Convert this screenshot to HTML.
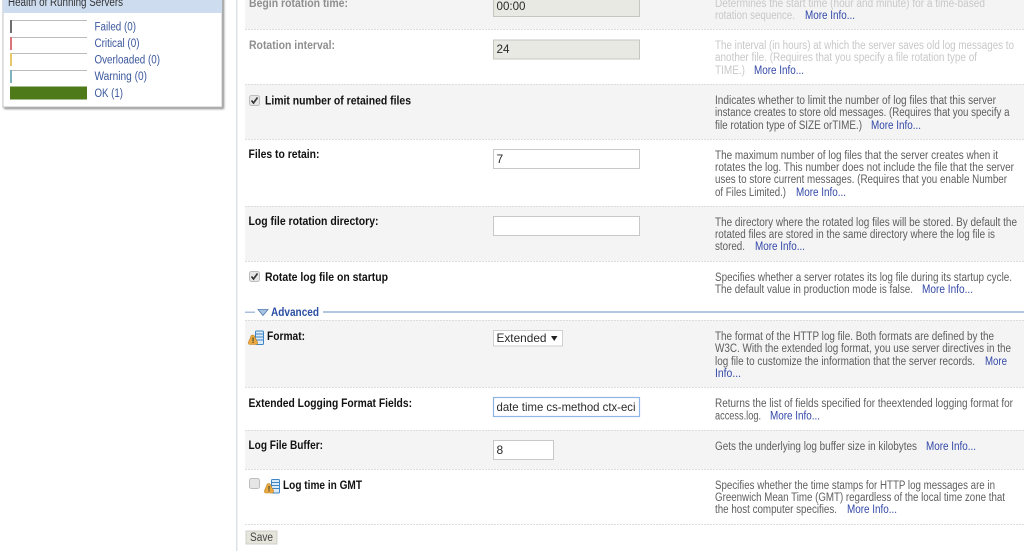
<!DOCTYPE html>
<html><head><meta charset="utf-8"><style>
html,body{margin:0;padding:0;background:#fff;overflow:hidden;width:1024px;height:551px}
svg{display:block;position:absolute;left:0;top:0;filter:blur(.35px)}
text{font-family:"Liberation Sans",sans-serif;font-size:11.5px;white-space:pre}
.d{fill:#5e5e5e}.g{fill:#c8c8c8}.m{fill:#3348a8}.b{font-weight:bold;fill:#111}.bg{font-weight:bold;fill:#8f8f8f}
.s{fill:#3a569c}.i{font-size:12px;fill:#2a2a2a}
.row{stroke:#ddd;stroke-dasharray:2 1;stroke-width:1}
</style></head><body>
<svg width="1024" height="551" viewBox="0 0 1024 551">
<defs>
<filter id="sh" x="-10%" y="-10%" width="120%" height="120%"><feDropShadow dx="1.5" dy="1.5" stdDeviation="1" flood-color="#555" flood-opacity=".7"/></filter>
<g id="ic"><rect x="7" y="0.5" width="8" height="13.5" rx="1" fill="#dcebf8" stroke="#3d86c6"/><path d="M7.5 3.5H14.5M7.5 6.5H14.5M7.5 9.5H14.5" stroke="#3d86c6"/><path d="M4 4.5 Q6 4.5 6.5 7 L9 11.5 Q9.5 14 7.5 14 H1.5 Q-0.5 14 0 11.5 L2 7 Q2.5 4.5 4 4.5Z" fill="#eba93f" stroke="#c08428" stroke-width=".6"/><rect x="3.9" y="7" width="1.3" height="3.6" fill="#553"/><rect x="3.9" y="11.2" width="1.3" height="1.3" fill="#553"/></g>
<g id="cb"><rect x="0.5" y="0.5" width="10" height="10" rx="2" fill="#e6e6e6" stroke="#bdbdbd"/></g>
<path id="ck" d="M2.5 5.5 L4.5 8 L8.5 2.5" fill="none" stroke="#333" stroke-width="1.6"/>
</defs>

<rect x="245" y="0" width="779" height="29" fill="#f4f4f4"/>
<rect x="245" y="84" width="779" height="55" fill="#f4f4f4"/>
<rect x="245" y="206" width="779" height="55" fill="#f4f4f4"/>
<rect x="245" y="320" width="779" height="67" fill="#f4f4f4"/>
<rect x="245" y="430" width="779" height="39" fill="#f4f4f4"/>
<path class="row" d="M245 29.5H1024M245 84.5H1024M245 139.5H1024M245 206.5H1024M245 261.5H1024M245 320.5H1024M245 387.5H1024M245 430.5H1024M245 469.5H1024M245 524.5H1024"/>
<rect x="236" y="0" width="1.5" height="551" fill="#dde2e8"/>

<rect x="3" y="-4" width="219" height="111" fill="#fff" stroke="#c4c4c4" filter="url(#sh)"/>
<rect x="3" y="0" width="219" height="13" fill="#cddcef"/>
<text x="8" y="6" fill="#333" textLength="115" lengthAdjust="spacingAndGlyphs">Health of Running Servers</text>
<g fill="#bbb">
<rect x="10" y="20" width="77" height="1"/><rect x="10" y="37" width="77" height="1"/><rect x="10" y="53" width="77" height="1"/><rect x="10" y="70" width="77" height="1"/>
</g>
<rect x="10" y="20" width="2" height="13" fill="#6e6e6e"/>
<rect x="10" y="37" width="2" height="13" fill="#d9737a"/>
<rect x="10" y="53" width="2" height="13" fill="#e6c96a"/>
<rect x="10" y="70" width="2" height="13" fill="#7fb2bd"/>
<rect x="10" y="86.5" width="77" height="13" fill="#4f7a1a"/>
<text class="s" x="94.5" y="30.5" textLength="41.5" lengthAdjust="spacingAndGlyphs">Failed (0)</text>
<text class="s" x="94.5" y="47" textLength="45" lengthAdjust="spacingAndGlyphs">Critical (0)</text>
<text class="s" x="94.5" y="63.5" textLength="65.5" lengthAdjust="spacingAndGlyphs">Overloaded (0)</text>
<text class="s" x="94.5" y="80" textLength="52.5" lengthAdjust="spacingAndGlyphs">Warning (0)</text>
<text class="s" x="94.5" y="97" textLength="28.5" lengthAdjust="spacingAndGlyphs">OK (1)</text>

<text class="bg" x="249" y="7" textLength="99" lengthAdjust="spacingAndGlyphs">Begin rotation time:</text>
<text class="bg" x="249" y="49" textLength="86" lengthAdjust="spacingAndGlyphs">Rotation interval:</text>
<use href="#cb" x="249" y="95"/><use href="#ck" x="249" y="95"/>
<text class="b" x="265" y="104.5" textLength="146" lengthAdjust="spacingAndGlyphs">Limit number of retained files</text>
<text class="b" x="248.5" y="158" textLength="71" lengthAdjust="spacingAndGlyphs">Files to retain:</text>
<text class="b" x="248.5" y="225" textLength="130" lengthAdjust="spacingAndGlyphs">Log file rotation directory:</text>
<use href="#cb" x="249" y="271"/><use href="#ck" x="249" y="271"/>
<text class="b" x="265" y="281" textLength="123" lengthAdjust="spacingAndGlyphs">Rotate log file on startup</text>
<use href="#ic" x="248.5" y="330.5"/>
<text class="b" x="267" y="340" textLength="38" lengthAdjust="spacingAndGlyphs">Format:</text>
<text class="b" x="248.5" y="407" textLength="163.5" lengthAdjust="spacingAndGlyphs">Extended Logging Format Fields:</text>
<text class="b" x="248.5" y="449" textLength="74.5" lengthAdjust="spacingAndGlyphs">Log File Buffer:</text>
<use href="#cb" x="249" y="478"/>
<use href="#ic" x="264.5" y="479"/>
<text class="b" x="283" y="489" textLength="79" lengthAdjust="spacingAndGlyphs">Log time in GMT</text>

<rect x="245" y="311.5" width="10" height="1.5" fill="#aac0dc"/>
<rect x="323" y="311" width="701" height="2" fill="#b4c6e0"/>
<path d="M258 309.5H268L263 315.5Z" fill="#a9c3e2" stroke="#4f78b0" stroke-width=".8"/>
<text x="271" y="316" font-weight="bold" fill="#2b4fa3" textLength="48" lengthAdjust="spacingAndGlyphs">Advanced</text>

<rect x="493.5" y="-3" width="146" height="19.5" fill="#e9e9e3" stroke="#c6c6c0"/>
<text class="i" x="496.5" y="10" textLength="29" lengthAdjust="spacingAndGlyphs">00:00</text>
<rect x="493.5" y="40" width="146" height="19" fill="#e9e9e3" stroke="#c6c6c0"/>
<text class="i" x="496.5" y="53" textLength="13" lengthAdjust="spacingAndGlyphs">24</text>
<rect x="493.5" y="149.5" width="146" height="19" fill="#fff" stroke="#c8c8c8"/>
<text class="i" x="496.5" y="163">7</text>
<rect x="493.5" y="216.5" width="146" height="19" fill="#fff" stroke="#c8c8c8"/>
<rect x="493.5" y="330.5" width="69" height="15.5" fill="#fff" stroke="#cfcfcf"/>
<text class="i" x="496.5" y="342" textLength="50" lengthAdjust="spacingAndGlyphs">Extended</text>
<path d="M551 336H557.5L554.2 341Z" fill="#222"/>
<rect x="493.5" y="397.5" width="146" height="19" fill="#fff" stroke="#8fb4e6" stroke-width="1.2"/>
<text class="i" x="496.5" y="411" textLength="139" lengthAdjust="spacingAndGlyphs">date time cs-method ctx-eci</text>
<rect x="493.5" y="440.5" width="60" height="19" fill="#fff" stroke="#c8c8c8"/>
<text class="i" x="496.5" y="454">8</text>

<text class="g" x="715" y="7" textLength="270" lengthAdjust="spacingAndGlyphs">Determines the start time (hour and minute) for a time-based</text>
<text class="g" x="715" y="19" textLength="80" lengthAdjust="spacingAndGlyphs">rotation sequence.</text>
<text class="m" x="805" y="19" textLength="50" lengthAdjust="spacingAndGlyphs">More Info...</text>

<text class="g" x="715" y="49" textLength="299" lengthAdjust="spacingAndGlyphs">The interval (in hours) at which the server saves old log messages to</text>
<text class="g" x="715" y="61" textLength="262" lengthAdjust="spacingAndGlyphs">another file. (Requires that you specify a file rotation type of</text>
<text class="g" x="715" y="74" textLength="30" lengthAdjust="spacingAndGlyphs">TIME.)</text>
<text class="m" x="754" y="74" textLength="50" lengthAdjust="spacingAndGlyphs">More Info...</text>

<text class="d" x="715" y="104" textLength="281" lengthAdjust="spacingAndGlyphs">Indicates whether to limit the number of log files that this server</text>
<text class="d" x="715" y="116" textLength="294.5" lengthAdjust="spacingAndGlyphs">instance creates to store old messages. (Requires that you specify a</text>
<text class="d" x="715" y="129" textLength="147" lengthAdjust="spacingAndGlyphs">file rotation type of SIZE orTIME.)</text>
<text class="m" x="871" y="129" textLength="50" lengthAdjust="spacingAndGlyphs">More Info...</text>

<text class="d" x="715" y="159" textLength="283" lengthAdjust="spacingAndGlyphs">The maximum number of log files that the server creates when it</text>
<text class="d" x="715" y="171" textLength="299" lengthAdjust="spacingAndGlyphs">rotates the log. This number does not include the file that the server</text>
<text class="d" x="715" y="183" textLength="292" lengthAdjust="spacingAndGlyphs">uses to store current messages. (Requires that you enable Number</text>
<text class="d" x="715" y="196" textLength="71" lengthAdjust="spacingAndGlyphs">of Files Limited.)</text>
<text class="m" x="796" y="196" textLength="50" lengthAdjust="spacingAndGlyphs">More Info...</text>

<text class="d" x="715" y="226" textLength="302" lengthAdjust="spacingAndGlyphs">The directory where the rotated log files will be stored. By default the</text>
<text class="d" x="715" y="238" textLength="280" lengthAdjust="spacingAndGlyphs">rotated files are stored in the same directory where the log file is</text>
<text class="d" x="715" y="250" textLength="30" lengthAdjust="spacingAndGlyphs">stored.</text>
<text class="m" x="755" y="250" textLength="50" lengthAdjust="spacingAndGlyphs">More Info...</text>

<text class="d" x="715" y="281" textLength="297" lengthAdjust="spacingAndGlyphs">Specifies whether a server rotates its log file during its startup cycle.</text>
<text class="d" x="715" y="293" textLength="198" lengthAdjust="spacingAndGlyphs">The default value in production mode is false.</text>
<text class="m" x="922" y="293" textLength="51" lengthAdjust="spacingAndGlyphs">More Info...</text>

<text class="d" x="715" y="340" textLength="279" lengthAdjust="spacingAndGlyphs">The format of the HTTP log file. Both formats are defined by the</text>
<text class="d" x="715" y="352" textLength="296" lengthAdjust="spacingAndGlyphs">W3C. With the extended log format, you use server directives in the</text>
<text class="d" x="715" y="365" textLength="260" lengthAdjust="spacingAndGlyphs">log file to customize the information that the server records.</text>
<text class="m" x="985" y="365" textLength="22" lengthAdjust="spacingAndGlyphs">More</text>
<text class="m" x="715" y="377" textLength="26" lengthAdjust="spacingAndGlyphs">Info...</text>

<text class="d" x="715" y="407" textLength="298" lengthAdjust="spacingAndGlyphs">Returns the list of fields specified for theextended logging format for</text>
<text class="d" x="715" y="419.5" textLength="46" lengthAdjust="spacingAndGlyphs">access.log.</text>
<text class="m" x="770" y="419.5" textLength="50" lengthAdjust="spacingAndGlyphs">More Info...</text>

<text class="d" x="715" y="450" textLength="202" lengthAdjust="spacingAndGlyphs">Gets the underlying log buffer size in kilobytes</text>
<text class="m" x="926" y="450" textLength="50" lengthAdjust="spacingAndGlyphs">More Info...</text>

<text class="d" x="715" y="489" textLength="280" lengthAdjust="spacingAndGlyphs">Specifies whether the time stamps for HTTP log messages are in</text>
<text class="d" x="715" y="501" textLength="290" lengthAdjust="spacingAndGlyphs">Greenwich Mean Time (GMT) regardless of the local time zone that</text>
<text class="d" x="715" y="513" textLength="122" lengthAdjust="spacingAndGlyphs">the host computer specifies.</text>
<text class="m" x="847" y="513" textLength="50" lengthAdjust="spacingAndGlyphs">More Info...</text>

<rect x="246" y="531" width="31" height="13" fill="#e6e5dc" stroke="#d0d0c8"/>
<text x="250" y="541" fill="#444" textLength="23" lengthAdjust="spacingAndGlyphs">Save</text>
</svg>
</body></html>
